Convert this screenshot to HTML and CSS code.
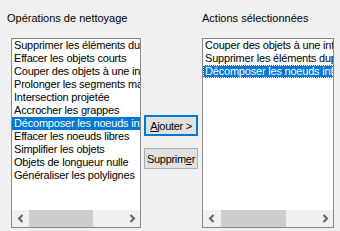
FILE: index.html
```html
<!DOCTYPE html>
<html lang="fr">
<head>
    <meta charset="UTF-8">
    <title>Nettoyage</title>
    <link rel="stylesheet" href="styles.css">
</head>
<body>
    <div class="dialog">
        <div class="column left">
            <div class="caption">Opérations de nettoyage</div>
            <div class="listbox">
                <ul class="items">
                    <li>Supprimer les éléments dupliqués</li>
                    <li>Effacer les objets courts</li>
                    <li>Couper des objets à une intersection</li>
                    <li>Prolonger les segments manquants</li>
                    <li>Intersection projetée</li>
                    <li>Accrocher les grappes</li>
                    <li class="selected">Décomposer les noeuds intermédiaires</li>
                    <li>Effacer les noeuds libres</li>
                    <li>Simplifier les objets</li>
                    <li>Objets de longueur nulle</li>
                    <li>Généraliser les polylignes</li>
                </ul>
                <div class="hscroll">
                    <span class="arrow">
                        <svg width="8" height="9" viewBox="0 0 8 9"><path d="M5.5 1 L2 4.5 L5.5 8" fill="none" stroke="#606060" stroke-width="2"/></svg>
                    </span>
                    <span class="track"><span class="thumb thumb-left"></span></span>
                    <span class="arrow">
                        <svg width="8" height="9" viewBox="0 0 8 9"><path d="M2.5 1 L6 4.5 L2.5 8" fill="none" stroke="#606060" stroke-width="2"/></svg>
                    </span>
                </div>
            </div>
        </div>
        <div class="buttons">
            <button class="btn default"><u>A</u>jouter &gt;</button>
            <button class="btn">Supprim<u>e</u>r</button>
        </div>
        <div class="column right">
            <div class="caption">Actions sélectionnées</div>
            <div class="listbox">
                <ul class="items">
                    <li>Couper des objets à une intersection</li>
                    <li>Supprimer les éléments dupliqués</li>
                    <li class="selected focused">Décomposer les noeuds intermédiaires</li>
                </ul>
                <div class="hscroll">
                    <span class="arrow">
                        <svg width="8" height="9" viewBox="0 0 8 9"><path d="M5.5 1 L2 4.5 L5.5 8" fill="none" stroke="#606060" stroke-width="2"/></svg>
                    </span>
                    <span class="track"><span class="thumb thumb-right"></span></span>
                    <span class="arrow">
                        <svg width="8" height="9" viewBox="0 0 8 9"><path d="M2.5 1 L6 4.5 L2.5 8" fill="none" stroke="#606060" stroke-width="2"/></svg>
                    </span>
                </div>
            </div>
        </div>
    </div>
</body>
</html>
```

FILE: styles.css
```css
body {
    margin: 0;
    background: #f0f0f0;
    font-family: "Liberation Sans", Arial, sans-serif;
    font-size: 11px;
    color: #000;
}
.dialog {
    display: flex;
    align-items: flex-start;
    padding: 12px 0 0 7px;
}
.column {
    display: flex;
    flex-direction: column;
}
.caption {
    height: 13px;
    line-height: 13px;
    white-space: nowrap;
    margin-bottom: 13px;
}
.left .listbox {
    margin-left: 4px;
    width: 130px;
}
.right {
    margin-left: 4px;
}
.right .listbox {
    width: 132px;
}
.listbox {
    box-sizing: border-box;
    height: 190px;
    border: 1px solid #828790;
    background: #fff;
    display: flex;
    flex-direction: column;
}
.items {
    flex: 1;
    list-style: none;
    margin: 0;
    padding: 0;
    overflow: hidden;
    letter-spacing: -0.2px;
}
.items li {
    height: 13px;
    line-height: 13px;
    padding-left: 2px;
    white-space: nowrap;
    overflow: hidden;
    box-sizing: border-box;
}
.items li.selected {
    background: #0078d7;
    color: #fff;
}
.items li.focused {
    outline: 1px dotted #fff;
    outline-offset: -1px;
}
.hscroll {
    height: 17px;
    display: flex;
    background: #f0f0f0;
}
.arrow {
    width: 17px;
    display: flex;
    align-items: center;
    justify-content: center;
}
.track {
    flex: 1;
    display: flex;
}
.thumb {
    background: #cdcdcd;
    height: 17px;
}
.thumb-left {
    width: 64px;
}
.thumb-right {
    width: 65px;
    margin-left: 1px;
}
.buttons {
    display: flex;
    flex-direction: column;
    gap: 12px;
    margin-top: 103px;
    margin-left: 3px;
}
.btn {
    box-sizing: border-box;
    width: 54px;
    height: 21px;
    padding: 0;
    font-family: "Liberation Sans", Arial, sans-serif;
    font-size: 11px;
    letter-spacing: -0.3px;
    color: #000;
    background: #e1e1e1;
    border: 1px solid #adadad;
    white-space: nowrap;
}
.btn.default {
    border: 2px solid #0078d7;
}
```
